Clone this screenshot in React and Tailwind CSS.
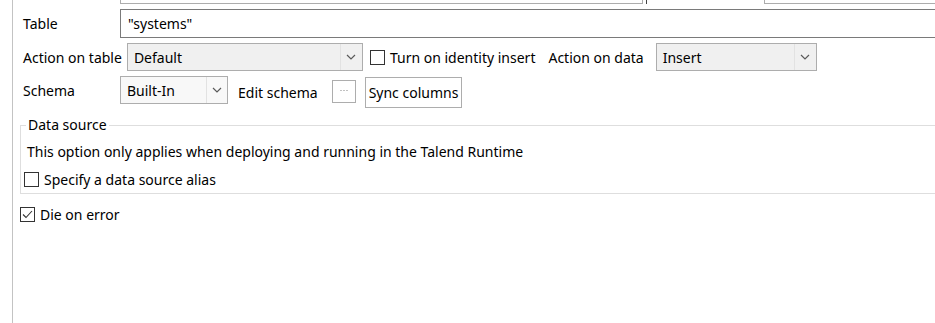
function Chevron() {
  return (
    <svg width="10" height="6" viewBox="0 0 10 6" className="block">
      <path d="M1 1 L5 5 L9 1" fill="none" stroke="#5a5a5a" strokeWidth="1.2" />
    </svg>
  );
}

function Combo({ value, width, bg = 'bg-[#f0f0f0]', arrowWidth = 22, height = 'h-[28px]' }) {
  return (
    <div className={`flex ${height} shrink-0 items-stretch border border-[#adadad] ${bg}`} style={{ width }}>
      <div className="flex flex-1 items-center pl-[6px]">{value}</div>
      <div className="flex items-center justify-center border-l border-[#e2e2e2]" style={{ width: arrowWidth }}>
        <Chevron />
      </div>
    </div>
  );
}

function Check({ checked }) {
  return (
    <span className="flex h-[15px] w-[15px] shrink-0 items-center justify-center border border-[#333] bg-white">
      {checked ? (
        <svg width="11" height="9" viewBox="0 0 11 9">
          <path d="M1 4.5 L4 7.5 L10 1" fill="none" stroke="#333" strokeWidth="1.1" />
        </svg>
      ) : null}
    </span>
  );
}

export default function App() {
  return (
    <div
      className="h-[323px] w-[935px] overflow-hidden bg-white text-[14px] text-black"
      style={{ fontFamily: '"Noto Sans", "Open Sans", sans-serif' }}
    >
      <div className="ml-[12px] h-full border-l border-[#c3c3c3]">
        {/* cut-off row above */}
        <div className="flex h-[4px] items-end">
          <div className="ml-[107px] h-[4px] w-[523px] border-x border-b border-[#adadad]" />
          <div className="ml-[3px] h-[4px] w-px bg-[#444]" />
          <div className="ml-[117px] h-[4px] flex-1 border-b border-l border-[#adadad]" />
        </div>

        {/* Table */}
        <div className="mt-[5px] flex h-[29px] items-center">
          <span className="w-[107px] shrink-0 pl-[10px]">Table</span>
          <div className="flex h-full flex-1 items-center border-y border-l border-[#7a7a7a] pl-[7px]">"systems"</div>
        </div>

        {/* Action on table */}
        <div className="mt-[5px] flex h-[28px] items-center">
          <span className="shrink-0 pl-[10px] pr-[5px]">Action on table</span>
          <Combo value="Default" width={236} />
          <span className="ml-[7px] flex items-center gap-[5px]">
            <Check />
            <span>Turn on identity insert</span>
          </span>
          <span className="ml-[13px]">Action on data</span>
          <span className="ml-[12px]">
            <Combo value="Insert" width={161} />
          </span>
        </div>

        {/* Schema */}
        <div className="mt-[5px] flex h-[32px] items-start">
          <span className="flex h-[28px] w-[107px] shrink-0 items-center pl-[10px]">Schema</span>
          <Combo value="Built-In" width={108} bg="bg-[#f8f8f8]" arrowWidth={21} height="h-[28px]" />
          <span className="ml-[10px] flex h-[32px] items-center">Edit schema</span>
          <div className="ml-[14px] mt-[4px] h-[23px] w-[24px] border border-[#adadad]">
            <svg width="22" height="21" viewBox="0 0 22 21" className="block">
              <circle cx="8" cy="9.5" r="0.6" fill="#777" />
              <circle cx="11" cy="9.5" r="0.6" fill="#777" />
              <circle cx="14" cy="9.5" r="0.6" fill="#777" />
            </svg>
          </div>
          <div className="ml-[9px] mt-[1px] flex h-[31px] items-center border border-[#adadad] px-[3px]">Sync columns</div>
        </div>

        {/* Data source group */}
        <fieldset className="ml-[7px] mt-[8px] h-[78px] border-y border-l border-[#dedede] pl-[6px]">
          <legend className="-ml-[1px] px-[2px] leading-[18px]">Data source</legend>
          <div className="mt-[8px] leading-[20px]">This option only applies when deploying and running in the Talend Runtime</div>
          <div className="mt-[7px] flex items-center">
            <span className="-ml-[3px] flex items-center gap-[5px]">
              <Check />
              <span>Specify a data source alias</span>
            </span>
          </div>
        </fieldset>

        {/* Die on error */}
        <div className="ml-[7px] mt-[10px] flex items-center gap-[5px]">
          <Check checked />
          <span>Die on error</span>
        </div>
      </div>
    </div>
  );
}
